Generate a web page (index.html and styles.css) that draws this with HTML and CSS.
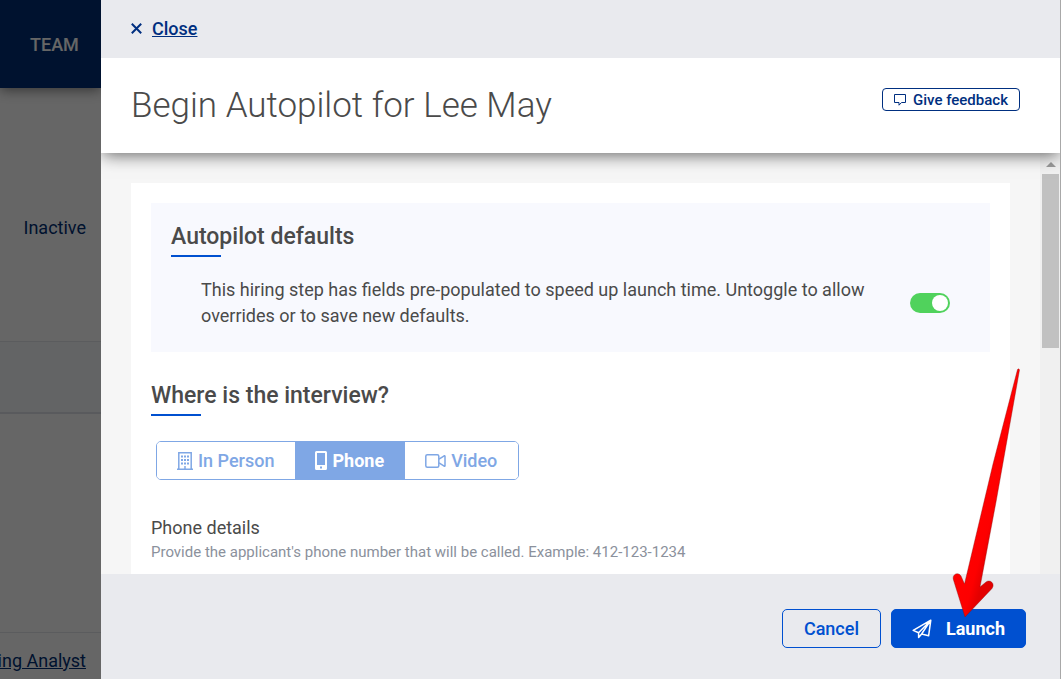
FILE: index.html
```
<!DOCTYPE html>
<html lang="en">
<head>
    <meta charset="UTF-8">
    <meta name="viewport" content="width=device-width, initial-scale=1.0">
    <title>Begin Autopilot</title>
    <link rel="stylesheet" href="styles.css">
</head>
<body>
    <div class="page">
        <nav class="page-nav"><a href="#">TEAM</a></nav>
        <div class="page-rows">
            <div class="page-row status-row">Inactive</div>
            <div class="page-row shaded-row"></div>
            <div class="page-row empty-row"></div>
            <div class="page-row job-row"><a href="#">ing Analyst</a></div>
        </div>
        <div class="backdrop"></div>
    </div>

    <main class="drawer">
        <div class="drawer-top">
            <a href="#" class="close-link">
                <svg width="11" height="11" viewBox="0 0 11 11" fill="none" stroke="currentColor" stroke-width="2"><path d="M0.8 0.8l9.4 9.4M10.2 0.8l-9.4 9.4"/></svg>
                <span>Close</span>
            </a>
        </div>

        <header class="drawer-header">
            <h1>Begin Autopilot for Lee May</h1>
            <button type="button" class="feedback-button">
                <svg width="12" height="12" viewBox="0 0 12 12" fill="none" stroke="currentColor"><path d="M0.5 0.5h11v8h-4l-2.5 2.7v-2.7h-4.5z"/></svg>
                Give feedback
            </button>
        </header>

        <div class="drawer-body">
            <div class="card">
                <section class="defaults">
                    <h2>Autopilot defaults</h2>
                    <div class="defaults-row">
                        <label for="useDefaults">This hiring step has fields pre-populated to speed up launch time. Untoggle to allow overrides or to save new defaults.</label>
                        <input type="checkbox" id="useDefaults" class="toggle" checked>
                    </div>
                </section>

                <section class="location">
                    <h2>Where is the interview?</h2>
                    <div class="segments">
                        <button type="button" class="segment">
                            <svg width="16" height="18" viewBox="0 0 16 18" fill="none" stroke="currentColor" stroke-width="1.5">
                                <path d="M1.8 17.2V0.8h12.4v16.4M0 17.2h16M8 14v3"/>
                                <path d="M4 4.5h2M7 4.5h2M10 4.5h2M4 8h2M7 8h2M10 8h2M4 11.5h2M7 11.5h2M10 11.5h2" stroke-width="2"/>
                            </svg>
                            In Person
                        </button>
                        <button type="button" class="segment active">
                            <svg width="12" height="19" viewBox="0 0 12 19" fill="currentColor"><path fill-rule="evenodd" d="M1.5 0h9A1.5 1.5 0 0 1 12 1.5v16a1.5 1.5 0 0 1-1.5 1.5h-9A1.5 1.5 0 0 1 0 17.5v-16A1.5 1.5 0 0 1 1.5 0zM2 2v12h8V2zM5 15.5v2h2v-2z"/></svg>
                            Phone
                        </button>
                        <button type="button" class="segment">
                            <svg width="21" height="14" viewBox="0 0 21 14" fill="none" stroke="currentColor" stroke-width="1.5" stroke-linejoin="round"><rect x="0.8" y="0.8" width="13" height="12.4" rx="1.5"/><path d="M14 5.2l5.2-3.4q0.8-0.3 0.8 0.5v9.4q0 0.8-0.8 0.5L14 8.8"/></svg>
                            Video
                        </button>
                    </div>
                    <h3>Phone details</h3>
                    <p class="hint">Provide the applicant's phone number that will be called. Example: 412-123-1234</p>
                </section>
            </div>
            <div class="scrollbar">
                <span class="scroll-arrow"></span>
                <span class="scroll-thumb"></span>
            </div>
        </div>

        <footer class="drawer-footer">
            <button type="button" class="button">Cancel</button>
            <button type="button" class="button primary">
                <svg width="20" height="20" viewBox="0 0 20 20" fill="none" stroke="currentColor" stroke-width="1.5" stroke-linejoin="round"><path d="M18.8 1.2L1.2 11.4l5.4 2.4v4.8l3-3.6 7 1.8zM6.6 13.8L18.8 1.2 9.6 15"/></svg>
                Launch
            </button>
        </footer>
    </main>

    <!-- Arrow pointing at the Launch button -->
    <svg class="pointer" width="72" height="252" viewBox="0 0 72 252">
        <defs>
            <linearGradient id="pointerFill" gradientUnits="userSpaceOnUse" x1="20" y1="195" x2="38" y2="200">
                <stop offset="0" stop-color="#ff0000"/>
                <stop offset="0.5" stop-color="#fd0000"/>
                <stop offset="1" stop-color="#e30000"/>
            </linearGradient>
        </defs>
        <path fill="url(#pointerFill)" stroke="#8c1010" stroke-width="0.4" d="M68.5 3.5q1.5-1.5 2 0.5L47 136 31 221l6-5c4-3 9.500 1.500 6 6.500L16 251 4.500 214c-2-6 5-8.500 7.500-4l3.500 8L44 98z"/>
    </svg>
</body>
</html>
```
FILE: styles.css
```
* {
    box-sizing: border-box;
}

body {
    margin: 0;
    display: flex;
    height: 100vh;
    overflow: hidden;
    font-family: Roboto, Arial, sans-serif;
    font-size: 18px;
    color: #4a4a4a;
}

button {
    font-family: inherit;
    cursor: pointer;
}

h1, h2, h3, p {
    margin: 0;
}

/* Page behind the drawer */
.page {
    position: relative;
    flex: 0 0 101px;
    display: flex;
    flex-direction: column;
    background: #fff;
    overflow: hidden;
}

.backdrop {
    position: absolute;
    inset: 0;
    background: rgba(0,0,0,0.6);
}

.page-nav {
    flex: none;
    height: 88px;
    padding-left: 30px;
    display: flex;
    align-items: center;
    background: #002f75;
    box-shadow: 0 2px 12px rgba(0,0,0,0.5);
    z-index: 0;
}

.page-nav a {
    color: #fff;
    font-weight: 500;
    text-decoration: none;
}

.page-rows {
    flex: 1;
    display: flex;
    flex-direction: column;
}

.page-row {
    flex: none;
    display: flex;
    align-items: center;
    justify-content: flex-end;
    padding-right: 15px;
    white-space: nowrap;
    color: #002f75;
    border-bottom: 1px solid #e4e6ea;
}

.page-row a {
    color: #002f75;
}

.status-row {
    height: 254px;
    padding-top: 26px;
}

.shaded-row {
    height: 72px;
    background: #f7f9fd;
    border-bottom: 2px solid #dfe2e8;
}

.empty-row {
    height: 219px;
}

.job-row {
    height: 55px;
    border-bottom: none;
}

/* Drawer */
.drawer {
    flex: 1;
    min-width: 0;
    display: flex;
    flex-direction: column;
    background: #f6f6f6;
    border-right: 1px solid #a8a8a8;
}

.drawer-top {
    height: 58px;
    padding: 0 30px 2px;
    display: flex;
    align-items: center;
    background: #e9eaee;
}

.close-link {
    display: flex;
    align-items: center;
    gap: 10px;
    color: #002f80;
    font-weight: 500;
    text-decoration: none;
}

.close-link span {
    text-decoration: underline;
}

.drawer-header {
    height: 95px;
    padding: 0 40px 0 30px;
    display: flex;
    align-items: center;
    justify-content: space-between;
    background: #fff;
    box-shadow: 0 4px 16px -2px rgba(0,0,0,0.6);
    clip-path: inset(0 0 -40px 0);
    z-index: 1;
}

.drawer-header h1 {
    font-size: 35px;
    font-weight: 300;
}

.feedback-button {
    display: flex;
    align-items: center;
    gap: 7px;
    height: 23px;
    margin-bottom: 12px;
    padding: 0 11px;
    border: 1px solid #002f80;
    border-radius: 4px;
    background: #fff;
    color: #002f80;
    font-size: 15px;
    font-weight: 500;
}

.drawer-body {
    flex: 1;
    min-height: 0;
    display: flex;
    gap: 30px;
    padding-left: 30px;
    overflow: hidden;
}

.card {
    flex: 1;
    margin-top: 30px;
    padding: 20px;
    background: #fff;
}

.card h2 {
    font-size: 23px;
    line-height: 28px;
    font-weight: 500;
}

.card h2::after {
    content: "";
    display: block;
    width: 50px;
    height: 2px;
    margin-top: 4px;
    background: #0050d0;
}

.defaults {
    padding: 20px 40px 23px 20px;
    background: #f8f9fe;
}

.defaults-row {
    display: flex;
    align-items: center;
    justify-content: space-between;
    gap: 20px;
    padding: 20px 0 0 30px;
}

.defaults-row label {
    max-width: 680px;
    line-height: 26px;
}

.toggle {
    appearance: none;
    flex: none;
    display: flex;
    align-items: center;
    width: 40px;
    height: 20px;
    margin: 0;
    padding: 2px;
    border-radius: 10px;
    background: #b8bcc4;
    cursor: pointer;
}

.toggle::before {
    content: "";
    width: 16px;
    height: 16px;
    border-radius: 50%;
    background: #fff;
}

.toggle:checked {
    justify-content: flex-end;
    background: #50d25c;
}

.location {
    padding-top: 30px;
}

.segments {
    display: inline-flex;
    margin: 25px 5px 36px;
    border: 1px solid #7fa7e5;
    border-radius: 5px;
    overflow: hidden;
}

.segment {
    display: flex;
    align-items: center;
    gap: 5px;
    height: 37px;
    padding: 0 21px 0 20px;
    border: none;
    background: #fff;
    color: #7fa7e5;
    font-size: 18px;
    font-weight: 500;
}

.segment.active {
    background: #7fa7e5;
    color: #fff;
    font-weight: 700;
}

.location h3 {
    font-size: 18px;
    line-height: 24px;
    font-weight: 400;
}

.hint {
    font-size: 15px;
    line-height: 24px;
    color: #8b919c;
}

/* Scrollbar */
.scrollbar {
    width: 20px;
    padding: 0 1px 0 2px;
    display: flex;
    flex-direction: column;
    align-items: center;
    background: #f0f0f0;
}

.scroll-arrow {
    margin: 9px 0 7px;
    border: 5px solid transparent;
    border-top: none;
    border-bottom: 5px solid #999;
}

.scroll-thumb {
    width: 100%;
    height: 174px;
    background: #c1c1c1;
}

/* Footer */
.drawer-footer {
    height: 105px;
    padding: 4px 34px 0;
    display: flex;
    align-items: center;
    justify-content: flex-end;
    gap: 10px;
    background: #e9eaee;
}

.button {
    display: flex;
    align-items: center;
    gap: 14px;
    height: 39px;
    padding: 0 21px;
    border: 1px solid #0050d0;
    border-radius: 5px;
    background: transparent;
    color: #0050d0;
    font-size: 18px;
    font-weight: 500;
}

.button.primary {
    padding: 0 20px;
    background: #0050d0;
    color: #fff;
    font-weight: 700;
}

.pointer {
    position: absolute;
    right: 40px;
    bottom: 61px;
    z-index: 2;
    pointer-events: none;
}
```
